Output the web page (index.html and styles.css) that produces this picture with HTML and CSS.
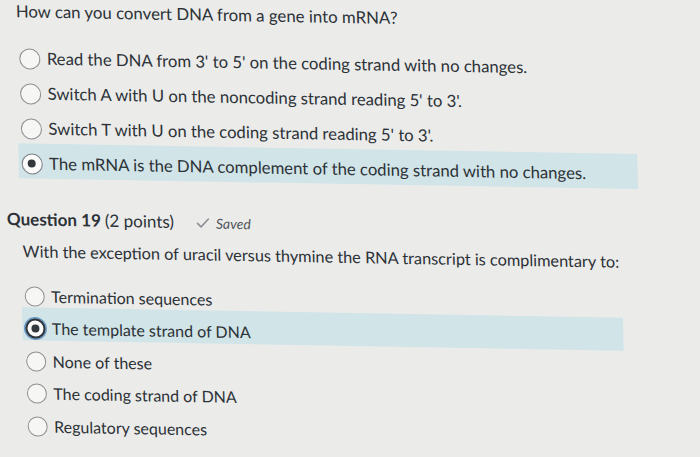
FILE: index.html
```html
<!DOCTYPE html>
<html lang="en">
<head>
<meta charset="utf-8">
<title>Quiz</title>
<link rel="stylesheet" href="styles.css">
</head>
<body>
<div class="page">
  <section class="question q-first">
    <p class="q-text title">How can you convert DNA from a gene into mRNA?</p>
    <ul class="opts opts-a">
      <li class="opt"><span class="radio"></span><span class="label">Read the DNA from 3' to 5' on the coding strand with no changes.</span></li>
      <li class="opt"><span class="radio"></span><span class="label">Switch A with U on the noncoding strand reading 5' to 3'.</span></li>
      <li class="opt"><span class="radio"></span><span class="label">Switch T with U on the coding strand reading 5' to 3'.</span></li>
      <li class="opt selected"><span class="radio checked"></span><span class="label">The mRNA is the DNA complement of the coding strand with no changes.</span></li>
    </ul>
  </section>
  <section class="question q-second">
    <div class="q-head"><span class="q-num">Question 19</span> (2 points)<span class="saved"><svg class="check" width="14" height="11" viewBox="0 0 14 11"><path d="M1.5 6 L5 9.5 L12.5 1.5" fill="none" stroke="#8d9296" stroke-width="1.6" stroke-linecap="round" stroke-linejoin="round"/></svg><em>Saved</em></span></div>
    <p class="q-text prompt">With the exception of uracil versus thymine the RNA transcript is complimentary to:</p>
    <ul class="opts opts-b">
      <li class="opt"><span class="radio"></span><span class="label">Termination sequences</span></li>
      <li class="opt selected"><span class="radio checked focus"></span><span class="label">The template strand of DNA</span></li>
      <li class="opt"><span class="radio"></span><span class="label">None of these</span></li>
      <li class="opt"><span class="radio"></span><span class="label">The coding strand of DNA</span></li>
      <li class="opt"><span class="radio"></span><span class="label">Regulatory sequences</span></li>
    </ul>
  </section>
</div>
</body>
</html>
```

FILE: styles.css
```css
html, body {
  margin: 0;
  padding: 0;
  background: #ebebea;
}
body {
  width: 700px;
  height: 457px;
  overflow: hidden;
  font-family: Lato, "Open Sans", "Liberation Sans", sans-serif;
  color: #2c3237;
  font-size: 16px;
  line-height: 20px;
}
.page {
  transform-origin: 0 0;
  transform: skew(1.3deg, 1deg);
  padding-top: 0.5px;
}
.q-text {
  margin: 0;
}
.title {
  margin-left: 15.5px;
  font-size: 16.8px;
}
.opts {
  list-style: none;
  margin: 0;
  padding: 0;
}
.opt {
  display: flex;
  align-items: center;
  gap: 7px;
  box-sizing: border-box;
  margin-left: 14.5px;
  padding-left: 3px;
}
.opts-a {
  margin-top: 17.5px;
  font-size: 16.7px;
}
.opts-a .opt {
  height: 35px;
  width: 619px;
  padding-top: 5px;
}
.opts-b {
  margin-top: 13.6px;
}
.opts-b .opt {
  height: 32.5px;
  width: 601px;
  padding-top: 9px;
}
.opt.selected {
  background: #d1e4e8;
}
.radio {
  flex: none;
  width: 20px;
  height: 20px;
  box-sizing: border-box;
  border-radius: 50%;
  border: 1.5px solid #8e9092;
  background: #f6f6f5;
  display: flex;
  align-items: center;
  justify-content: center;
}
.opts-a .radio {
  width: 21px;
  height: 21px;
}
.radio.checked {
  background: #fbfbfb;
  border-color: #7d8084;
}
.radio.checked::after {
  content: "";
  width: 8px;
  height: 8px;
  border-radius: 50%;
  background: #33383d;
}
.radio.focus {
  border: 2px solid #2f3438;
  box-shadow: 0 0 0 1.5px #6f9ac4;
}
.q-second {
  margin-top: 30.8px;
}
.q-head {
  margin-left: 2px;
  display: flex;
  align-items: baseline;
  font-size: 17px;
}
.q-num {
  font-weight: 700;
  margin-right: 4px;
}
.saved {
  display: inline-flex;
  align-items: baseline;
  margin-left: 22px;
  font-size: 14px;
  color: #50565b;
}
.check {
  margin-right: 6px;
}
.prompt {
  margin-top: 11.6px;
  margin-left: 17px;
  font-size: 16.3px;
}
```
